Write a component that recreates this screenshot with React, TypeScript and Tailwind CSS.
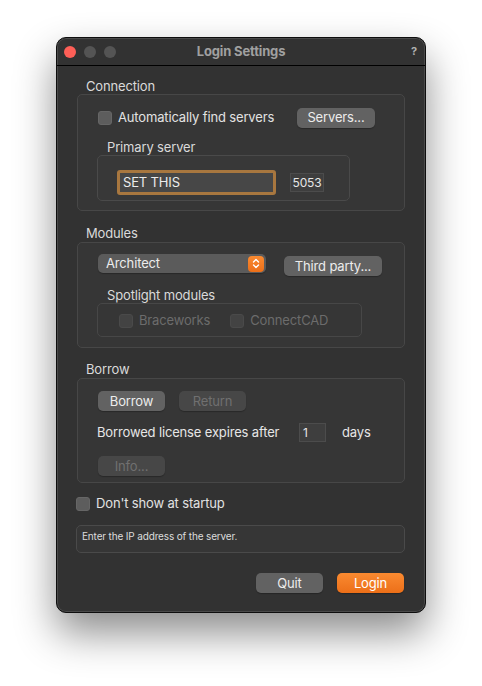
import type { ReactNode } from 'react';

const font = { fontFamily: 'Inter, "Liberation Sans", sans-serif' };

function Button({
  children,
  disabled,
  primary,
  className = '',
}: {
  children: ReactNode;
  disabled?: boolean;
  primary?: boolean;
  className?: string;
}) {
  const tone = primary
    ? 'bg-gradient-to-b from-[#fa8a30] to-[#ec6f18] text-white'
    : disabled
      ? 'bg-[#474747] text-[#707070]'
      : 'bg-[#626262] text-[#ececec]';
  return (
    <div
      className={`flex h-[20px] items-center justify-center rounded-[5px] text-[13px] leading-none shadow-[0_1px_1px_rgba(0,0,0,0.25)] ${tone} ${className}`}
    >
      {children}
    </div>
  );
}

function Checkbox({ disabled }: { disabled?: boolean }) {
  return (
    <div
      className={`h-[14px] w-[14px] shrink-0 rounded-[3px] ${
        disabled
          ? 'bg-[#434343] border border-[#4a4a4a]'
          : 'bg-[#5d5d5d] border border-[#666666]'
      }`}
    />
  );
}

function GroupLabel({ children, className = '' }: { children: ReactNode; className?: string }) {
  return (
    <div className={`h-[15px] pl-[9px] text-[13px] leading-[15px] text-[#dadada] ${className}`}>
      {children}
    </div>
  );
}

function Group({ children, className = '' }: { children: ReactNode; className?: string }) {
  return (
    <div className={`rounded-[5px] border border-[#474747] bg-[#363636] ${className}`}>
      {children}
    </div>
  );
}

export default function App() {
  return (
    <div className="h-[686px] w-[482px] bg-white pl-[56px] pt-[37px] tracking-[-0.15px]" style={font}>
      <div className="flex w-[370px] flex-col overflow-hidden rounded-[10px] border border-[#0e0e0e] bg-[#323232] shadow-[0_20px_40px_rgba(0,0,0,0.45),inset_0_0_0_1px_rgba(255,255,255,0.12)]">
        {/* title bar */}
        <div className="relative flex h-[28px] items-center border-b border-black px-[7px]">
          <div className="flex gap-[8px]">
            <div className="h-[12px] w-[12px] rounded-full bg-[#fe5f57]" />
            <div className="h-[12px] w-[12px] rounded-full bg-[#545454]" />
            <div className="h-[12px] w-[12px] rounded-full bg-[#545454]" />
          </div>
          <div className="absolute inset-x-0 top-0 flex h-full items-center justify-center text-[13px] font-bold text-[#a0a0a0]">
            Login Settings
          </div>
          <div className="ml-auto pr-[1px] text-[11px] font-bold text-[#b0b0b0]">?</div>
        </div>

        <div className="flex flex-col px-[20px] pb-[19px]">
          {/* Connection */}
          <GroupLabel className="mt-[13px]">Connection</GroupLabel>
          <Group className="h-[117px]">
            <div className="mt-[13px] flex h-[19px] items-center justify-between pl-[20px] pr-[29px]">
              <div className="flex items-center gap-[6px]">
                <Checkbox />
                <span className="text-[13px] text-[#e2e2e2]">Automatically find servers</span>
              </div>
              <Button className="h-[19px] w-[78px]">Servers...</Button>
            </div>
            <div className="mt-[12px] h-[16px] pl-[29px] text-[13px] leading-[16px] text-[#dadada]">
              Primary server
            </div>
            <div className="ml-[19px] flex h-[46px] w-[253px] items-start rounded-[5px] border border-[#4a4a4a] bg-[#383838] pl-[19px] pt-[14px]">
              <div className="flex h-[25px] w-[159px] items-center border-[3px] border-[#a8773f] rounded-[3px] bg-[#474747] pl-[3px] text-[13px] text-[#ececec]">
                SET THIS
              </div>
              <div className="ml-[14px] mt-[3px] flex h-[19px] w-[34px] items-center justify-center border border-[#4c4c4c] bg-[#3e3e3e] text-[12px] text-[#e6e6e6]">
                5053
              </div>
            </div>
          </Group>

          {/* Modules */}
          <GroupLabel className="mt-[15px]">Modules</GroupLabel>
          <Group className="mt-[1px] h-[106px]">
            <div className="mt-[11px] flex items-start pl-[20px]">
              <div className="flex h-[19px] w-[168px] items-center justify-between rounded-[5px] bg-[#5b5b5b] pl-[8px] pr-[2px] shadow-[0_1px_1px_rgba(0,0,0,0.25)]">
                <span className="text-[13px] text-[#ececec]">Architect</span>
                <div className="flex h-[16px] w-[16px] items-center justify-center rounded-[4px] bg-gradient-to-b from-[#fa8a30] to-[#ec6f18]">
                  <svg width="8" height="11" viewBox="0 0 8 11" fill="none">
                    <path d="M1.5 4 L4 1.5 L6.5 4" stroke="white" strokeWidth="1.4" strokeLinecap="round" strokeLinejoin="round" />
                    <path d="M1.5 7 L4 9.5 L6.5 7" stroke="white" strokeWidth="1.4" strokeLinecap="round" strokeLinejoin="round" />
                  </svg>
                </div>
              </div>
              <Button className="ml-[18px] mt-[2px] w-[98px]">Third party...</Button>
            </div>
            <div className="mt-[11px] h-[16px] pl-[29px] text-[13px] leading-[16px] text-[#dadada]">
              Spotlight modules
            </div>
            <div className="ml-[19px] flex h-[34px] w-[265px] items-center rounded-[5px] border border-[#474747] pl-[21px] pt-[2px]">
              <div className="flex items-center gap-[6px]">
                <Checkbox disabled />
                <span className="text-[13px] text-[#6c6c6c]">Braceworks</span>
              </div>
              <div className="ml-[20px] flex items-center gap-[6px]">
                <Checkbox disabled />
                <span className="text-[13px] text-[#6c6c6c]">ConnectCAD</span>
              </div>
            </div>
          </Group>

          {/* Borrow */}
          <GroupLabel className="mt-[14px]">Borrow</GroupLabel>
          <Group className="mt-[1px] h-[105px]">
            <div className="mt-[12px] flex gap-[14px] pl-[20px]">
              <Button className="w-[67px]">Borrow</Button>
              <Button disabled className="w-[67px]">Return</Button>
            </div>
            <div className="mt-[12px] flex h-[19px] items-center pl-[19px]">
              <span className="w-[202px] text-[13px] text-[#e6e6e6]">Borrowed license expires after</span>
              <div className="flex h-[19px] w-[27px] items-center border border-[#4c4c4c] bg-[#3e3e3e] pl-[3px] text-[12px] text-[#e6e6e6]">
                1
              </div>
              <span className="ml-[16px] text-[13px] text-[#e6e6e6]">days</span>
            </div>
            <div className="mt-[14px] pl-[20px]">
              <Button disabled className="w-[67px]">Info...</Button>
            </div>
          </Group>

          <div className="mt-[13px] flex h-[16px] items-center gap-[6px] -ml-[1px]">
            <Checkbox />
            <span className="text-[13px] text-[#e2e2e2]">Don't show at startup</span>
          </div>

          <div className="-ml-[1px] mt-[13px] h-[28px] rounded-[5px] border border-[#4a4a4a] bg-[#363636] pl-[5px] pt-[4px] text-[10px] leading-[12px] text-[#dcdcdc]">
            Enter the IP address of the server.
          </div>

          <div className="mt-[20px] flex justify-end gap-[14px] pr-[1px]">
            <Button className="w-[67px]">Quit</Button>
            <Button primary className="w-[67px]">Login</Button>
          </div>
        </div>
      </div>
    </div>
  );
}
